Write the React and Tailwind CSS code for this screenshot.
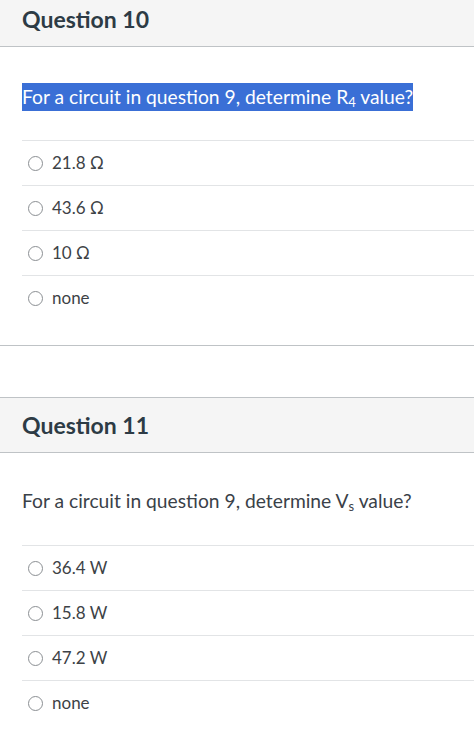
export default function App() {
  const q10 = ["21.8 Ω", "43.6 Ω", "10 Ω", "none"];
  const q11 = ["36.4 W", "15.8 W", "47.2 W", "none"];

  return (
    <div className="mt-[-8px] bg-white font-['Lato',sans-serif] text-[#2d3b45]">
      {/* question 10 */}
      <div className="border-b border-[#bfc3c6]">
        <div className="h-[55px] flex items-center px-[22px] bg-[#f5f5f5] border-b border-[#bfc3c6]">
          <h2 className="text-[23px] font-bold">Question 10</h2>
        </div>
        <div className="pl-[22px] pt-[36px]">
          <p className="text-[19.25px] leading-[28px]">
            <span className="inline-block leading-[28px] bg-[#3a6fd6] text-white">
              For a circuit in question 9, determine R<sub className="text-[13px] leading-none">4</sub> value?
            </span>
          </p>
          <div className="mt-[29px] pb-[25px]">
            {q10.map((a) => (
              <Answer key={a} label={a} />
            ))}
          </div>
        </div>
      </div>

      {/* question 11 */}
      <div className="mt-[51px] border-t border-[#bfc3c6]">
        <div className="h-[55px] flex items-center px-[22px] bg-[#f5f5f5] border-b border-[#bfc3c6]">
          <h2 className="text-[23px] font-bold">Question 11</h2>
        </div>
        <div className="pl-[22px] pt-[34px]">
          <p className="text-[19.25px] leading-[28px] text-[#3a4148]">
            For a circuit in question 9, determine V<sub className="text-[13px] leading-none">s</sub> value?
          </p>
          <div className="mt-[30px] pb-[25px]">
            {q11.map((a) => (
              <Answer key={a} label={a} />
            ))}
          </div>
        </div>
      </div>
    </div>
  );
}

function Answer({ label }) {
  return (
    <div className="h-[45px] flex items-center border-t border-[#e2e4e6]">
      <span className="ml-[6px] w-[15px] h-[15px] rounded-full border-[1.5px] border-[#8b8f93]" />
      <span className="ml-[9px] text-[17px] text-[#3d4246]">{label}</span>
    </div>
  );
}
